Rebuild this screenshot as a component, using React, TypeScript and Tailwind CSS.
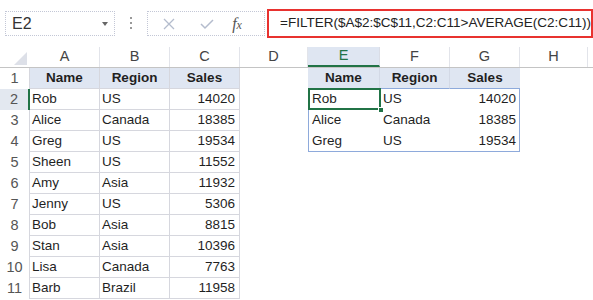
import React from "react";

const data = [
  ["Rob", "US", "14020"],
  ["Alice", "Canada", "18385"],
  ["Greg", "US", "19534"],
  ["Sheen", "US", "11552"],
  ["Amy", "Asia", "11932"],
  ["Jenny", "US", "5306"],
  ["Bob", "Asia", "8815"],
  ["Stan", "Asia", "10396"],
  ["Lisa", "Canada", "7763"],
  ["Barb", "Brazil", "11958"],
];

const result = data.slice(0, 3);

const headers = [
  { l: "A", w: "w-[70px]" },
  { l: "B", w: "w-[70px]" },
  { l: "C", w: "w-[70px]" },
  { l: "D", w: "w-[68px]" },
  { l: "E", w: "w-[72px]" },
  { l: "F", w: "w-[70px]" },
  { l: "G", w: "w-[70px]" },
  { l: "H", w: "w-[68px]" },
];

const FormulaBar = () => (
  <div className="flex h-[47px] items-start">
    <div className="ml-[5px] mt-[11px] flex h-[25px] w-[111px] items-center justify-between border border-dotted border-[#c3c7d6] pl-[6px] pr-[6px]">
      <span className="text-[16px] text-[#333]">E2</span>
      <span className="h-0 w-0 border-x-[3.5px] border-t-[4px] border-x-transparent border-t-[#666]" />
    </div>
    <div className="ml-[15px] mt-[17px] flex w-[3px] flex-col gap-[3px]">
      <span className="h-[2px] w-[2px] bg-[#999]" />
      <span className="h-[2px] w-[2px] bg-[#999]" />
      <span className="h-[2px] w-[2px] bg-[#999]" />
    </div>
    <div className="ml-[14px] mt-[11px] flex h-[25px] w-[119px] items-center border border-dotted border-[#c3c7d6]">
      <svg width="14" height="14" viewBox="0 0 14 14" className="ml-[14px]">
        <path d="M2 2 L12 12 M12 2 L2 12" stroke="#b4bccd" strokeWidth="1.3" fill="none" />
      </svg>
      <svg width="16" height="14" viewBox="0 0 16 14" className="ml-[23px]">
        <path d="M2 7 L6 11 L14 3" stroke="#b4bccd" strokeWidth="1.5" fill="none" />
      </svg>
      <span className="ml-[17px] font-['Liberation_Serif',serif] text-[16px] italic text-[#555]">
        f<span className="text-[12px]">x</span>
      </span>
    </div>
    <div className="ml-[2px] mt-[9px] flex h-[29px] flex-1 items-center border-[2.5px] border-[#e8322f] pl-[11px]">
      <span className="whitespace-nowrap text-[13.5px] text-[#222]">
        =FILTER($A$2:$C$11,C2:C11&gt;AVERAGE(C2:C11))
      </span>
    </div>
  </div>
);

const ColumnHeaders = () => (
  <div className="flex h-[21px] border-b border-[#c4c4c4]">
    <div className="relative w-[30px]">
      <span className="absolute bottom-[2px] right-[3px] h-0 w-0 border-b-[13px] border-l-[13px] border-b-[#dde0e8] border-l-transparent" />
    </div>
    {headers.map((h) =>
      h.l === "E" ? (
        <div
          key={h.l}
          className={`${h.w} flex items-center justify-center border-b-2 border-r border-b-[#217346] border-r-[#dadde6] bg-[#dfe6f2] text-[14.5px] text-[#217346]`}
        >
          {h.l}
        </div>
      ) : (
        <div
          key={h.l}
          className={`${h.w} flex items-center justify-center border-r border-[#e2e4ea] text-[14.5px] text-[#444]`}
        >
          {h.l}
        </div>
      )
    )}
  </div>
);

const grid = "border-r border-b border-[#d6d7de]";

const Row = ({ n }: { n: number }) => {
  const left = n === 1 ? ["Name", "Region", "Sales"] : data[n - 2];
  const res = n === 1 ? ["Name", "Region", "Sales"] : n <= 4 ? result[n - 2] : null;
  const head = n === 1;
  return (
    <div className="flex h-[21px]">
      {n === 2 ? (
        <div className="flex w-[30px] items-center justify-center border-r-2 border-[#217346] bg-[#e3e8f0] text-[14.5px] text-[#555]">
          {n}
        </div>
      ) : (
        <div className="flex w-[30px] items-center justify-center border-r border-[#d6d7de] text-[14.5px] text-[#555]">
          {n}
        </div>
      )}
      {left.map((v, i) =>
        head ? (
          <div
            key={i}
            className={`w-[70px] ${grid} flex items-center justify-center bg-[#dfe6f2] font-bold`}
          >
            {v}
          </div>
        ) : (
          <div
            key={i}
            className={`w-[70px] ${grid} flex items-center ${i === 2 ? "justify-end pr-[4px]" : "pl-[2px]"}`}
          >
            {v}
          </div>
        )
      )}
      <div className="w-[68px]" />
      {res === null ? (
        <div className="w-[212px]" />
      ) : head ? (
        <>
          <div className="flex w-[72px] items-center justify-center border-b border-r border-b-[#8eaadb] border-r-[#d3d9e6] bg-[#dfe6f2] font-bold">
            Name
          </div>
          <div className="flex w-[70px] items-center justify-center border-b border-r border-b-[#8eaadb] border-r-[#d3d9e6] bg-[#dfe6f2] font-bold">
            Region
          </div>
          <div className="flex w-[70px] items-center justify-center border-b border-[#8eaadb] bg-[#dfe6f2] font-bold">
            Sales
          </div>
        </>
      ) : (
        <>
          <div
            className={`relative flex w-[72px] items-center border-l border-[#8eaadb] pl-[3px] ${n === 4 ? "border-b" : ""}`}
          >
            {res[0]}
            {n === 2 && (
              <>
                <span className="absolute -top-px left-[-1px] h-[22px] w-[73px] border-2 border-[#217346]" />
                <span className="absolute bottom-[-3px] right-[-4px] h-[6px] w-[6px] border border-white bg-[#217346]" />
              </>
            )}
          </div>
          <div className={`flex w-[70px] items-center pl-[3px] ${n === 4 ? "border-b border-[#8eaadb]" : ""}`}>
            {res[1]}
          </div>
          <div
            className={`flex w-[70px] items-center justify-end border-r border-[#8eaadb] pr-[3px] ${n === 4 ? "border-b" : ""}`}
          >
            {res[2]}
          </div>
        </>
      )}
    </div>
  );
};

export default function App() {
  return (
    <div className="h-[300px] w-[593px] overflow-hidden bg-white font-['Liberation_Sans',Arial,sans-serif] text-[13.5px] text-[#1f1f1f]">
      <FormulaBar />
      <ColumnHeaders />
      {Array.from({ length: 11 }, (_, i) => (
        <Row key={i} n={i + 1} />
      ))}
    </div>
  );
}
